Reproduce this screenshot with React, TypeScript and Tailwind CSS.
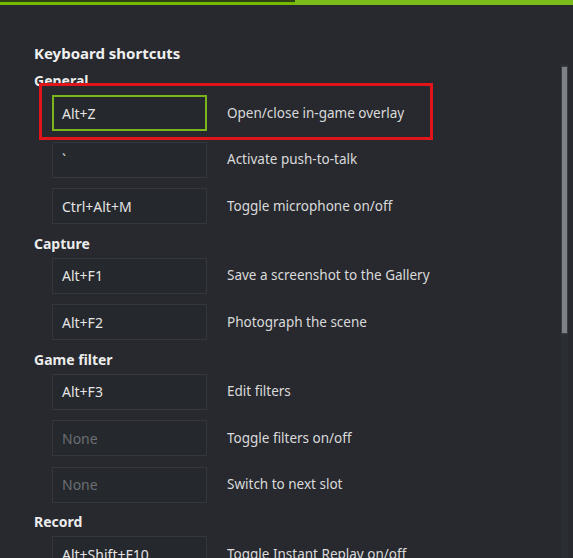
const sections = [
  {
    title: "General",
    rows: [
      { keys: "Alt+Z", label: "Open/close in-game overlay", focused: true },
      { keys: "`", label: "Activate push-to-talk" },
      { keys: "Ctrl+Alt+M", label: "Toggle microphone on/off" },
    ],
  },
  {
    title: "Capture",
    rows: [
      { keys: "Alt+F1", label: "Save a screenshot to the Gallery" },
      { keys: "Alt+F2", label: "Photograph the scene" },
    ],
  },
  {
    title: "Game filter",
    rows: [
      { keys: "Alt+F3", label: "Edit filters" },
      { keys: "", label: "Toggle filters on/off" },
      { keys: "", label: "Switch to next slot" },
    ],
  },
  {
    title: "Record",
    rows: [{ keys: "Alt+Shift+F10", label: "Toggle Instant Replay on/off" }],
  },
];

type Row = { keys: string; label: string; focused?: boolean };

function ShortcutRow({ row }: { row: Row }) {
  return (
    <div className="relative flex items-center h-[36px] ml-[18px]">
      {row.focused && (
        <div className="absolute left-[-13px] top-[-12px] w-[394px] h-[57px] border-[3px] border-[#e0141b] pointer-events-none" />
      )}
      <div
        className={
          row.focused
            ? "w-[155px] h-[36px] flex items-center px-[8px] border-2 border-[#7ab51d] bg-[#25282c]"
            : "w-[155px] h-[36px] flex items-center px-[9px] border border-[#34373d] bg-[#25282c]"
        }
      >
        {row.keys ? (
          <span className="text-[#e4e4e4]">{row.keys}</span>
        ) : (
          <span className="text-[#6b6e73]">None</span>
        )}
      </div>
      <span className="ml-[20px] text-[13.5px] text-[#dadada]">{row.label}</span>
    </div>
  );
}

export default function App() {
  return (
    <div
      className="relative w-[573px] h-[558px] overflow-hidden bg-[#27292e] text-[14px]"
      style={{ fontFamily: '"Segoe UI", "Noto Sans", "Open Sans", sans-serif' }}
    >
      {/* Top accent bar */}
      <div className="flex h-[5px]">
        <div className="w-[295px] flex flex-col">
          <div className="h-[2px] bg-[#2f4214]" />
          <div className="h-[3px] bg-[#76b900]" />
        </div>
        <div className="flex-1 bg-[#7cbc1a]" />
      </div>

      <div className="pl-[34px] pt-[38px]">
        <h2 className="text-[15px] leading-[20px] font-bold text-[#f0f0f0]">
          Keyboard shortcuts
        </h2>
        <div className="mt-[8px] flex flex-col gap-[9.5px]">
          {sections.map((s) => (
            <div key={s.title}>
              <h3 className="h-[20px] leading-[20px] font-bold text-[#ececec] mb-[4px]">
                {s.title}
              </h3>
              <div className="flex flex-col gap-[10.5px]">
                {s.rows.map((r, i) => (
                  <ShortcutRow key={i} row={r} />
                ))}
              </div>
            </div>
          ))}
        </div>
      </div>

      {/* Scrollbar */}
      <div className="absolute right-[5px] top-[64px] bottom-0 w-[7px] bg-[#2b2e33]">
        <div className="mt-[2px] h-[268px] bg-[#7e8186] border border-[#3a3d42]" />
      </div>
    </div>
  );
}
